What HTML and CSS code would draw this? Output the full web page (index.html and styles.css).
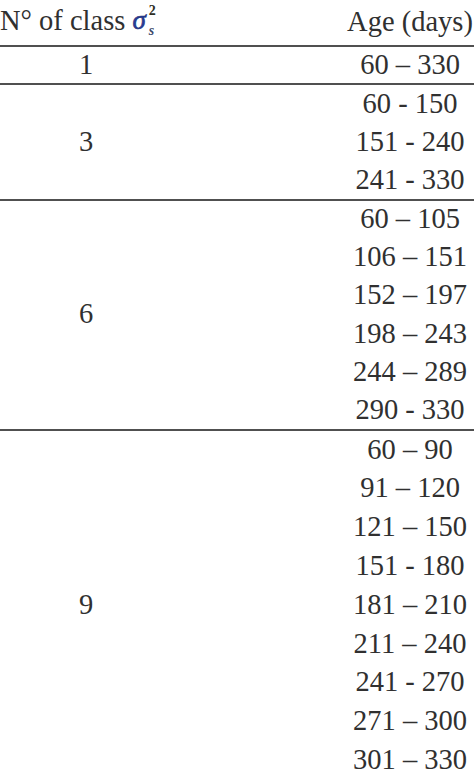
FILE: index.html
```html
<!DOCTYPE html>
<html>
<head>
<meta charset="utf-8">
<link rel="stylesheet" href="styles.css">
</head>
<body>
<table class="classes">
  <colgroup>
    <col class="c-left">
    <col class="c-mid">
    <col class="c-right">
  </colgroup>
  <thead>
    <tr class="head">
      <th class="h-left">N° of class <span class="sigma"><span class="sig">σ</span><span class="scripts"><span class="sup">2</span><span class="sub">s</span></span></span></th>
      <th></th>
      <th class="h-right">Age (days)</th>
    </tr>
  </thead>
  <tbody class="group">
    <tr><td class="n">1</td><td></td><td class="age">60 – 330</td></tr>
  </tbody>
  <tbody class="group">
    <tr><td class="n" rowspan="3">3</td><td rowspan="3"></td><td class="age">60 - 150</td></tr>
    <tr><td class="age">151 - 240</td></tr>
    <tr><td class="age">241 - 330</td></tr>
  </tbody>
  <tbody class="group">
    <tr><td class="n" rowspan="6">6</td><td rowspan="6"></td><td class="age">60 – 105</td></tr>
    <tr><td class="age">106 – 151</td></tr>
    <tr><td class="age">152 – 197</td></tr>
    <tr><td class="age">198 – 243</td></tr>
    <tr><td class="age">244 – 289</td></tr>
    <tr><td class="age">290 - 330</td></tr>
  </tbody>
  <tbody class="group last">
    <tr><td class="n" rowspan="9">9</td><td rowspan="9"></td><td class="age">60 – 90</td></tr>
    <tr><td class="age">91 – 120</td></tr>
    <tr><td class="age">121 – 150</td></tr>
    <tr><td class="age">151 - 180</td></tr>
    <tr><td class="age">181 – 210</td></tr>
    <tr><td class="age">211 – 240</td></tr>
    <tr><td class="age">241 - 270</td></tr>
    <tr><td class="age">271 – 300</td></tr>
    <tr><td class="age">301 – 330</td></tr>
  </tbody>
</table>
</body>
</html>
```

FILE: styles.css
```css
html, body {
  margin: 0;
  padding: 0;
  background: #ffffff;
}

body {
  font-family: "Liberation Serif", "Times New Roman", serif;
  font-size: 28.5px;
  color: #303030;
  overflow: hidden;
}

.classes {
  width: 474px;
  border-collapse: collapse;
  table-layout: fixed;
}

.c-left { width: 172px; }
.c-mid { width: auto; }
.c-right { width: 128px; }

.classes th,
.classes td {
  padding: 0;
  font-weight: normal;
  vertical-align: middle;
  line-height: 1;
}

.head {
  height: 46px;
  border-bottom: 2px solid #505050;
}

.h-left {
  text-align: left;
  white-space: nowrap;
  padding-left: 0;
}

.h-right {
  text-align: center;
  white-space: nowrap;
}

.group tr {
  height: 38.4px;
}

.group.last tr {
  height: 38.9px;
}

.group {
  border-bottom: 2px solid #505050;
}

.group.last {
  border-bottom: none;
}

.n {
  text-align: center;
  padding-right: 2px;
}

.age {
  text-align: center;
  white-space: nowrap;
  padding-left: 2px;
}

.sigma {
  display: inline-flex;
  align-items: center;
  vertical-align: -2px;
  margin-left: 0;
}

.sig {
  font-style: italic;
  font-size: 27px;
  color: #2a3f9a;
  position: relative;
  top: -3px;
  -webkit-text-stroke: 0.6px #1e2f7a;
}

.scripts {
  display: inline-flex;
  flex-direction: column;
  font-size: 14px;
  line-height: 14px;
  font-weight: bold;
  margin-left: 3px;
  color: #2e2e22;
}

.sup {
  position: relative;
  top: -6px;
}

.sub {
  font-style: italic;
  color: #3d4a6a;
}
```
